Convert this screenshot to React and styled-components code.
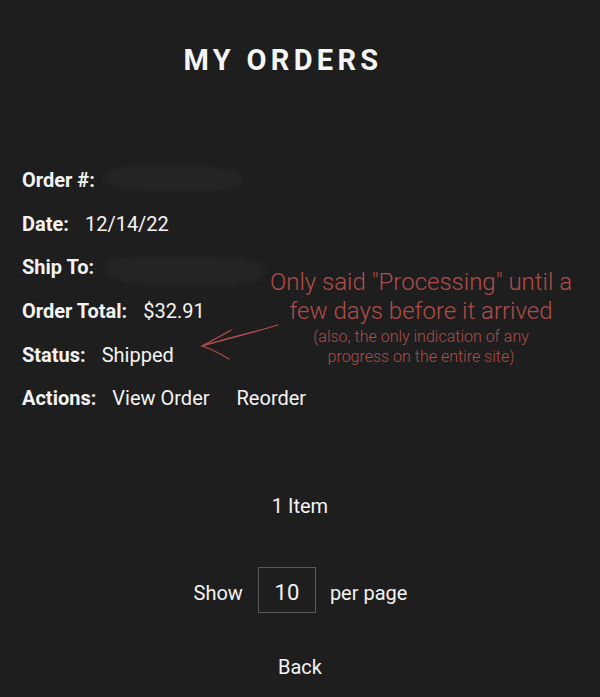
import React from 'react'
import styled, { createGlobalStyle } from 'styled-components'

const Global = createGlobalStyle`
  html, body {
    margin: 0;
    padding: 0;
    background: #1e1e1e;
  }
  body {
    font-family: Roboto, "Liberation Sans", sans-serif;
    color: #f3f3f3;
  }
`;

const Page = styled.div`
  position: relative;
  width: 600px;
  height: 697px;
  overflow: hidden;
  background: #1e1e1e;
`;

const Title = styled.h1`
  margin: 0;
  padding: 43px 34px 0 0;
  text-align: center;
  font-size: 29px;
  line-height: 34px;
  font-weight: 700;
  letter-spacing: 4.3px;
  color: #f5f5f5;
`;

const Details = styled.div`
  margin-top: 82px;
  padding-left: 22px;
  display: flex;
  flex-direction: column;
`;

const Row = styled.div`
  display: flex;
  align-items: center;
  height: 43.7px;
  font-size: 20px;
  line-height: 43.7px;
`;

const Label = styled.span`
  font-weight: 700;
  margin-right: ${props => props.gap || 16}px;
`;

const Value = styled.span`
  font-weight: 400;
  margin-right: ${props => props.gap || 0}px;
`;

const Smudge = styled.span`
  display: inline-block;
  width: ${props => props.w}px;
  height: ${props => props.h}px;
  margin-top: ${props => props.top || 0}px;
  background: #252525;
  border-radius: 30% 40% 35% 45%;
  filter: blur(2.5px);
`;

const Note = styled.div`
  position: absolute;
  left: 261px;
  top: 268px;
  width: 320px;
  text-align: center;
  color: #b04c4a;
  font-family: "Roboto Light", Roboto, sans-serif;
  font-weight: 300;
`;

const NoteBig = styled.div`
  font-size: 24px;
  line-height: 29px;
`;

const NoteSmall = styled.div`
  margin-top: 1px;
  font-size: 16px;
  line-height: 19px;
`;

const Arrow = styled.svg`
  position: absolute;
  left: 195px;
  top: 318px;
`;

const Footer = styled.div`
  margin-top: 73px;
  display: flex;
  flex-direction: column;
  align-items: center;
  font-size: 20px;
`;

const Count = styled.div`
  line-height: 24px;
`;

const PerPage = styled.div`
  margin-top: 49px;
  display: flex;
  align-items: baseline;
  gap: 15px;
  padding-left: 1px;
`;

const CountBox = styled.div`
  box-sizing: border-box;
  width: 58px;
  height: 46px;
  padding-top: 6px;
  border: 1px solid #5a5a5a;
  text-align: center;
  font-size: 22px;
  line-height: 38px;
  margin-right: -1px;
`;

const Back = styled.div`
  margin-top: 42px;
  line-height: 24px;
`;

function App() {
  return (
    <Page>
      <Global />
      <Title>MY ORDERS</Title>
      <Details>
        <Row>
          <Label gap={10}>Order #:</Label>
          <Smudge w={138} h={26} top={-4} />
        </Row>
        <Row>
          <Label>Date:</Label>
          <Value>12/14/22</Value>
        </Row>
        <Row>
          <Label gap={12}>Ship To:</Label>
          <Smudge w={158} h={30} top={6} />
        </Row>
        <Row>
          <Label>Order Total:</Label>
          <Value>$32.91</Value>
        </Row>
        <Row>
          <Label>Status:</Label>
          <Value>Shipped</Value>
        </Row>
        <Row>
          <Label>Actions:</Label>
          <Value gap={27}>View Order</Value>
          <Value>Reorder</Value>
        </Row>
      </Details>

      <Arrow width="90" height="46" viewBox="0 0 90 46">
        <g fill="none" stroke="#b84c4c" strokeWidth="1.3" strokeLinecap="round">
          <path d="M83 7 C 60 14, 30 21, 7 28" />
          <path d="M36 12 C 26 18, 16 23, 7 28" />
          <path d="M7 28 C 14 30, 24 35, 34 41" />
        </g>
      </Arrow>

      <Note>
        <NoteBig>Only said "Processing" until a</NoteBig>
        <NoteBig>few days before it arrived</NoteBig>
        <NoteSmall>(also, the only indication of any</NoteSmall>
        <NoteSmall>progress on the entire site)</NoteSmall>
      </Note>

      <Footer>
        <Count>1 Item</Count>
        <PerPage>
          <span>Show</span>
          <CountBox>10</CountBox>
          <span>per page</span>
        </PerPage>
        <Back>Back</Back>
      </Footer>
    </Page>
  )
}

export default App
